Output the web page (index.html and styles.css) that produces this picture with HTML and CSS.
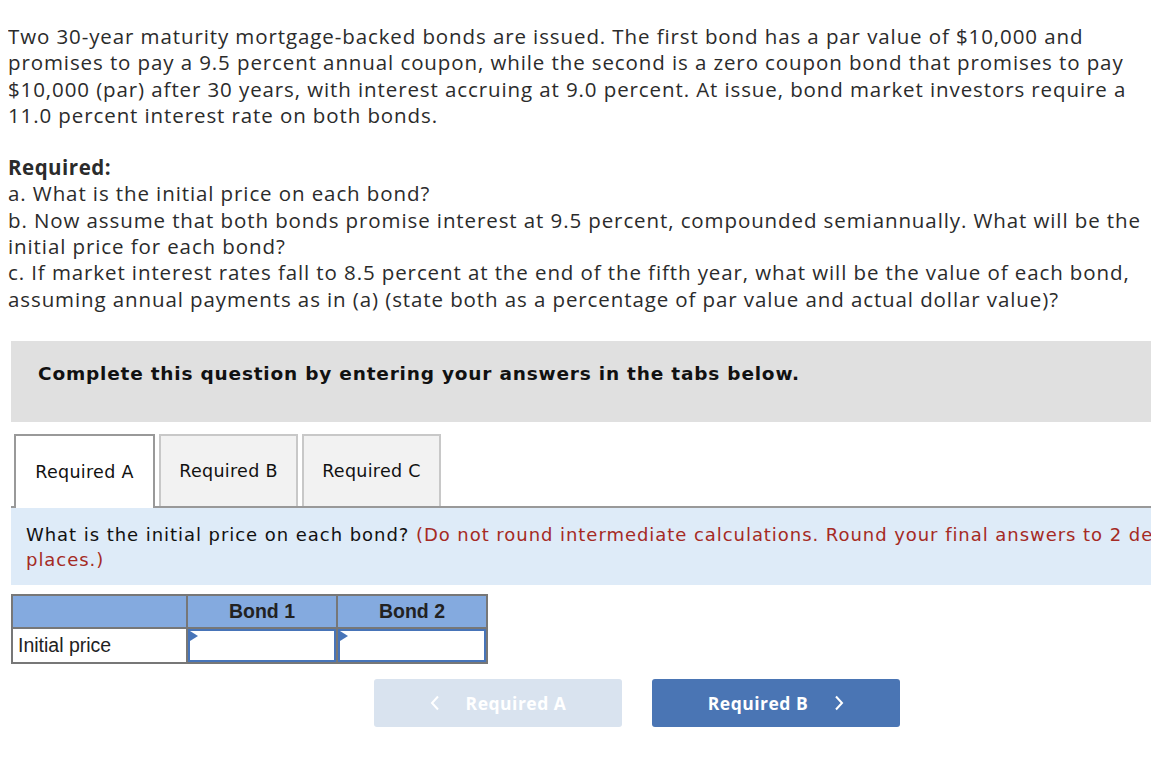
FILE: index.html
```html
<!DOCTYPE html>
<html>
<head>
<meta charset="utf-8">
<link rel="stylesheet" href="styles.css">
</head>
<body>
<div class="question">
  <p class="intro">Two 30-year maturity mortgage-backed bonds are issued. The first bond has a par value of $10,000 and promises to pay a 9.5 percent annual coupon, while the second is a zero coupon bond that promises to pay $10,000 (par) after 30 years, with interest accruing at 9.0 percent. At issue, bond market investors require a 11.0 percent interest rate on both bonds.</p>
  <div class="required">
    <div class="req-title">Required:</div>
    <div>a. What is the initial price on each bond?</div>
    <div>b. Now assume that both bonds promise interest at 9.5 percent, compounded semiannually. What will be the initial price for each bond?</div>
    <div>c. If market interest rates fall to 8.5 percent at the end of the fifth year, what will be the value of each bond, assuming annual payments as in (a) (state both as a percentage of par value and actual dollar value)?</div>
  </div>
</div>
<div class="work">
  <div class="banner">Complete this question by entering your answers in the tabs below.</div>
  <div class="tabs">
    <div class="tab active">Required A</div>
    <div class="tab">Required B</div>
    <div class="tab">Required C</div>
  </div>
  <div class="instr">What is the initial price on each bond? <span class="hint">(Do not round intermediate calculations. Round your final answers to 2 decimal places.)</span></div>
  <table class="grid">
    <tr class="head"><th></th><th>Bond 1</th><th>Bond 2</th></tr>
    <tr><td class="label">Initial price</td><td class="cell"><div class="input"><span class="flag"></span></div></td><td class="cell"><div class="input"><span class="flag"></span></div></td></tr>
  </table>
  <div class="nav">
    <div class="btn prev"><svg class="chev" width="10" height="16" viewBox="0 0 10 16"><path d="M8 1.5 L2 8 L8 14.5" fill="none" stroke="#fff" stroke-width="2"/></svg><span>Required A</span></div>
    <div class="btn next"><span>Required B</span><svg class="chev" width="10" height="16" viewBox="0 0 10 16"><path d="M2 1.5 L8 8 L2 14.5" fill="none" stroke="#fff" stroke-width="2"/></svg></div>
  </div>
</div>
</body>
</html>
```
FILE: styles.css
```css
body {
  margin: 8px;
  background: #fff;
  color: #2b2b2b;
}
.question {
  font-family: "Open Sans", Lato, sans-serif;
  font-size: 20.5px;
  letter-spacing: 0.9px;
  line-height: 26.3px;
  width: 1146px;
}
.intro {
  margin: 15px 0 26px 0;
}
.req-title {
  font-weight: bold;
  letter-spacing: 0.5px;
}
.work {
  margin: 29px 0 0 3px;
  width: 1140px;
  overflow: hidden;
}
.banner {
  background: #e0e0e0;
  height: 81px;
  box-sizing: border-box;
  padding: 22px 0 0 27px;
  font-family: "DejaVu Sans", Verdana, sans-serif;
  font-weight: bold;
  font-size: 18.5px;
  letter-spacing: 0.8px;
  color: #111;
}
.tabs {
  display: flex;
  gap: 4px;
  margin-top: 12px;
  padding-left: 3px;
  border-bottom: 2px solid #999;
}
.tab {
  width: 139px;
  height: 72px;
  box-sizing: border-box;
  border: 2px solid #c8c8c8;
  border-bottom: none;
  background: #f2f2f2;
  display: flex;
  align-items: center;
  justify-content: center;
  font-family: "DejaVu Sans", Verdana, sans-serif;
  font-size: 17.5px;
  letter-spacing: 0.3px;
  color: #111;
  margin-bottom: -2px;
}
.tab.active {
  width: 141px;
  background: #fff;
  border-color: #999;
  height: 74px;
}
.instr {
  background: #deebf8;
  height: 77px;
  box-sizing: border-box;
  padding: 14px 0 0 15px;
  font-family: "DejaVu Sans", Verdana, sans-serif;
  font-size: 18px;
  letter-spacing: 0.95px;
  line-height: 25px;
  color: #111;
  width: 1220px;
}
.hint { color: #a52a24; }
.grid {
  margin-top: 9px;
  border-collapse: collapse;
  font-family: "Liberation Sans", Arial, sans-serif;
  font-size: 19.5px;
  color: #222;
}
.grid th, .grid td {
  border: 2px solid #777;
  padding: 0;
}
.grid .head th {
  background: #84aadf;
  height: 31px;
  font-weight: bold;
  text-align: center;
}
.grid th:nth-child(1) { width: 173px; }
.grid th:nth-child(2) { width: 148px; }
.grid th:nth-child(3) { width: 148px; }
.grid .label {
  height: 33px;
  padding-left: 5px;
  text-align: left;
}
.grid .cell { padding: 0; }
.input {
  position: relative;
  height: 29px;
  border: 2px solid #4774b8;
  background: #fff;
}
.flag {
  position: absolute;
  left: 0;
  top: 0;
  width: 0;
  height: 0;
  border-top: 5px solid transparent;
  border-bottom: 5px solid transparent;
  border-left: 8px solid #4774b8;
}
.nav {
  display: flex;
  gap: 30px;
  margin-top: 15px;
  margin-left: 363px;
}
.btn {
  width: 248px;
  height: 48px;
  border-radius: 3px;
  display: flex;
  align-items: center;
  justify-content: center;
  gap: 26px;
  font-family: "Open Sans", Lato, sans-serif;
  font-weight: bold;
  font-size: 17.5px;
  letter-spacing: 0.5px;
  color: #fff;
}
.prev { background: #d9e3ef; }
.next { background: #4a75b4; }
```
